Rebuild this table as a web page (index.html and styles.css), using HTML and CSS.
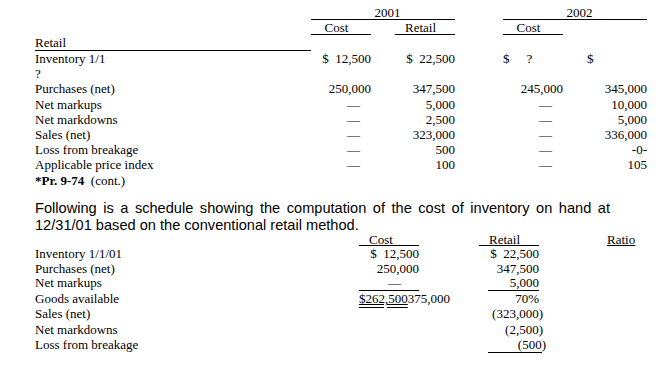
FILE: index.html
```html
<!DOCTYPE html>
<html lang="en">
<head>
<meta charset="utf-8">
<title>Retail inventory schedule</title>
<link rel="stylesheet" href="styles.css">
</head>
<body>
<div class="page">
  <div class="sched">
    <div class="row hdr1">
      <div class="yr y1">2001</div>
      <div class="yr y2">2002</div>
    </div>
    <div class="row hdr2">
      <div class="hc a">Cost</div>
      <div class="hc b">Retail</div>
      <div class="hc c">Cost</div>
    </div>
    <div class="row hdr3">
      <div class="lbl ruled">Retail</div>
    </div>
    <div class="row body">
      <div class="lbl">Inventory 1/1</div>
      <div class="num a">$&nbsp; 12,500</div>
      <div class="num b">$&nbsp; 22,500</div>
      <div class="txt c">$<span class="q">?</span></div>
      <div class="txt d">$</div>
    </div>
    <div class="row body">
      <div class="lbl">?</div>
    </div>
    <div class="row body">
      <div class="lbl">Purchases (net)</div>
      <div class="num a">250,000</div>
      <div class="num b">347,500</div>
      <div class="num c">245,000</div>
      <div class="num d">345,000</div>
    </div>
    <div class="row body">
      <div class="lbl">Net markups</div>
      <div class="num dash a">—</div>
      <div class="num b">5,000</div>
      <div class="num dash c">—</div>
      <div class="num d">10,000</div>
    </div>
    <div class="row body">
      <div class="lbl">Net markdowns</div>
      <div class="num dash a">—</div>
      <div class="num b">2,500</div>
      <div class="num dash c">—</div>
      <div class="num d">5,000</div>
    </div>
    <div class="row body">
      <div class="lbl">Sales (net)</div>
      <div class="num dash a">—</div>
      <div class="num b">323,000</div>
      <div class="num dash c">—</div>
      <div class="num d">336,000</div>
    </div>
    <div class="row body">
      <div class="lbl">Loss from breakage</div>
      <div class="num dash a">—</div>
      <div class="num b">500</div>
      <div class="num dash c">—</div>
      <div class="num d">-0-</div>
    </div>
    <div class="row body">
      <div class="lbl">Applicable price index</div>
      <div class="num dash a">—</div>
      <div class="num b">100</div>
      <div class="num dash c">—</div>
      <div class="num d">105</div>
    </div>
    <div class="row body">
      <div class="lbl"><b>*Pr. 9-74</b>&nbsp; (cont.)</div>
    </div>
  </div>

  <p class="intro">Following is a schedule showing the computation of the cost of inventory on hand at 12/31/01 based on the conventional retail method.</p>

  <div class="calc">
    <div class="crow chead">
      <div class="ch cc">Cost</div>
      <div class="ch cr">Retail</div>
      <div class="ratio">Ratio</div>
    </div>
    <div class="crow">
      <div class="lbl">Inventory 1/1/01</div>
      <div class="num cc">$&nbsp; 12,500</div>
      <div class="num cr">$&nbsp; 22,500</div>
    </div>
    <div class="crow">
      <div class="lbl">Purchases (net)</div>
      <div class="num cc">250,000</div>
      <div class="num cr">347,500</div>
    </div>
    <div class="crow tight">
      <div class="lbl">Net markups</div>
      <div class="num cc ruled cdash">—</div>
      <div class="num cr"><span class="uline">5,000</span></div>
    </div>
    <div class="crow">
      <div class="lbl">Goods available</div>
      <div class="txt cc over"><span class="dbl">$262,500</span>375,000</div>
      <div class="num cr">70%</div>
    </div>
    <div class="crow">
      <div class="lbl">Sales (net)</div>
      <div class="num cr"><span class="neg">(323,000)</span></div>
    </div>
    <div class="crow">
      <div class="lbl">Net markdowns</div>
      <div class="num cr"><span class="neg">(2,500)</span></div>
    </div>
    <div class="crow">
      <div class="lbl">Loss from breakage</div>
      <div class="num cr"><span class="uline last"><span class="neg">(500)</span></span></div>
    </div>
  </div>
</div>
</body>
</html>
```

FILE: styles.css
```css
html, body {
  margin: 0;
  padding: 0;
  background: #fff;
}

body {
  width: 670px;
  height: 374px;
  overflow: hidden;
  color: #000;
  font-family: "Liberation Serif", "Times New Roman", serif;
  font-size: 13px;
}

.page {
  padding: 5px 0 0 35px;
}

/* ---------- top schedule ---------- */
.row {
  display: grid;
  grid-template-columns: 276px 60px 24px 60px 48px 60px 24px 60px;
}

.lbl { grid-column: 1; white-space: nowrap; }
.a { grid-column: 2; }
.b { grid-column: 4; }
.c { grid-column: 6; }
.d { grid-column: 8; }

.yr {
  padding: 2px 0 0 9px;
  line-height: 12px;
  text-align: center;
  border-bottom: 1px solid #000;
}
.y1 { grid-column: 2 / 5; }
.y2 { grid-column: 6 / 9; }

.hc {
  padding: 2px 9px 0 0;
  line-height: 12px;
  text-align: center;
  border-bottom: 1px solid #000;
}

.hdr3 .lbl {
  padding-top: 1px;
  line-height: 14px;
}
.ruled {
  border-bottom: 1px solid #000;
}

.body {
  line-height: 15.2px;
}

.num {
  text-align: right;
  white-space: nowrap;
}
.txt {
  white-space: nowrap;
}
.dash {
  padding-right: 11px;
}
.q {
  margin-left: 17px;
}

/* ---------- paragraph ---------- */
.intro {
  margin: 12px 0 0;
  width: 575px;
  font-family: "Liberation Sans", Arial, Helvetica, sans-serif;
  font-size: 14.6px;
  line-height: 17px;
  text-align: justify;
}

/* ---------- computation table ---------- */
.calc {
  margin-top: 0;
}

.crow {
  display: grid;
  grid-template-columns: 324px 60px 60px 60px 68px auto;
  line-height: 15.2px;
}

.crow .lbl { grid-column: 1; }
.cc { grid-column: 2; }
.cr { grid-column: 4; }
.ratio {
  grid-column: 6;
  text-decoration: underline;
  text-underline-offset: 1px;
}

.chead {
  line-height: 11px;
}
.ch {
  padding-left: 10px;
  border-bottom: 1px solid #000;
}

.tight {
  line-height: 14px;
}
.cdash {
  padding-right: 18px;
}

.uline {
  display: block;
  margin-left: 9px;
  border-bottom: 1px solid #000;
}
.uline.last {
  margin-right: -3px;
}

.neg {
  margin-right: -4px;
}

.over {
  overflow: visible;
}
.dbl {
  text-decoration: underline double;
  text-underline-offset: 1px;
}
```
